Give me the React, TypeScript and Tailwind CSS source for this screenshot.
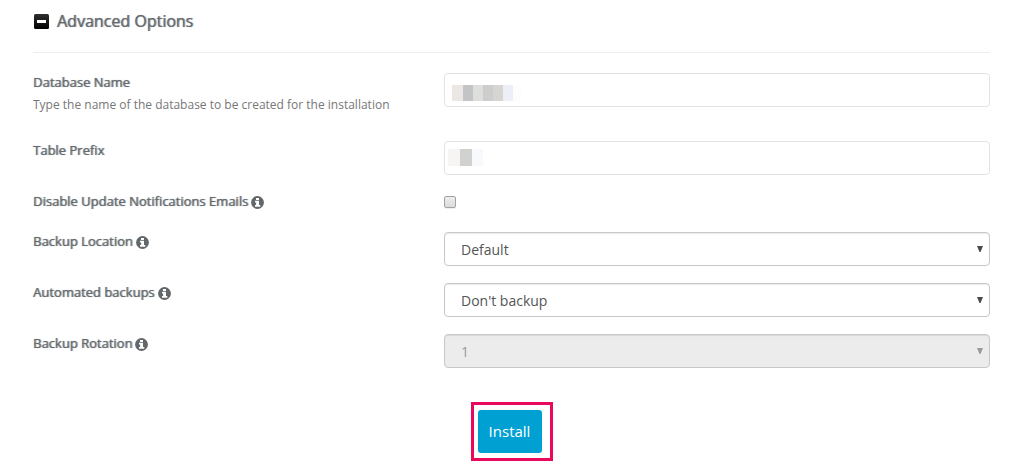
import type { ReactNode } from "react";

function InfoIcon() {
  return (
    <svg viewBox="0 0 14 14" className="ml-[3px] inline-block size-[13px] align-[-3px]" aria-hidden="true">
      <circle cx="7" cy="7" r="6.9" fill="#63676a" />
      <path d="M5.400 2.200h3.200v2H5.400z M4.300 5.200h4.300v4.600h1.400v1.900H4.300V9.800h1.200V7.100H4.300z" fill="#fff" />
    </svg>
  );
}

function ToggleIcon() {
  return (
    <svg viewBox="0 0 15 15" className="size-[15px]" aria-hidden="true">
      <defs>
        <linearGradient id="toggle" x1="0" y1="0" x2="0" y2="1">
          <stop offset="0" stopColor="#303030" />
          <stop offset="1" stopColor="#000" />
        </linearGradient>
      </defs>
      <rect width="15" height="15" rx="1.500" fill="url(#toggle)" />
      <rect x="3" y="6" width="9" height="3" fill="#fff" />
    </svg>
  );
}

type RowProps = {
  id: string;
  label: string;
  info?: boolean;
  hint?: string;
  className?: string;
  children: ReactNode;
};

function Row({ id, label, info, hint, className = "", children }: RowProps) {
  return (
    <div className={`grid grid-cols-[411fr_546fr] ${className}`}>
      <div>
        <label htmlFor={id} className="block text-[13px] leading-[18px] [text-shadow:0_0_1px_#666a6d80,1px_0_0_#666a6d80]">
          {label}
          {info && <InfoIcon />}
        </label>
        {hint && <p className="mt-[5px] text-[12px] leading-[18px] text-[#777]">{hint}</p>}
      </div>
      <div>{children}</div>
    </div>
  );
}

function MaskedInput({ id, children }: { id: string; children: ReactNode }) {
  return (
    <div className="relative">
      <input
        id={id}
        type="text"
        className="block h-[34px] w-full rounded-[4px] border border-[#e3e3e3] bg-white px-4 text-[14px] outline-none"
      />
      <div className="pointer-events-none absolute inset-y-0 left-0 flex">{children}</div>
    </div>
  );
}

function SelectBox({ id, value, disabled }: { id: string; value: string; disabled?: boolean }) {
  return (
    <div className="relative">
      <select
        id={id}
        disabled={disabled}
        className="block h-[34px] w-full appearance-none rounded-[4px] border border-[#c8c8c8] bg-white px-4 text-[14px] text-[#555] shadow-[inset_0_1px_1px_rgba(0,0,0,0.08)] outline-none disabled:bg-[#ececec] disabled:text-[#999] disabled:opacity-100"
      >
        <option>{value}</option>
      </select>
      <svg
        viewBox="0 0 6 6"
        className={`pointer-events-none absolute top-[14px] right-[7px] size-[6px] ${disabled ? "text-[#999]" : "text-[#4a4a4a]"}`}
        aria-hidden="true"
      >
        <path d="M0 0H6L3.500 6H2.500z" fill="currentColor" />
      </svg>
    </div>
  );
}

export default function App() {
  return (
    <main className="bg-white px-[33px] pt-[10px] pb-[14px] font-['Open_Sans','Noto_Sans',sans-serif] text-[#666a6d]">
      <h2 className="flex items-center gap-2 border-b border-[#eee] pb-5 pl-px text-[16px] leading-[22px] font-normal [text-shadow:0_0_1px_#666a6d80,1px_0_0_#666a6d80]">
        <ToggleIcon />
        Advanced Options
      </h2>
      <form className="flex flex-col gap-[17px] pt-5" onSubmit={(e) => e.preventDefault()}>
        <Row
          id="database"
          label="Database Name"
          hint="Type the name of the database to be created for the installation"
          className="min-h-[51px]"
        >
          <MaskedInput id="database">
            <div className="mt-3 ml-2 flex h-4">
              <span className="w-[11px] bg-[#ebe7e4]" />
              <span className="w-[10px] bg-[#c3c4c6]" />
              <span className="w-[10px] bg-[#dededc]" />
              <span className="w-[10px] bg-[#cdcdce]" />
              <span className="w-[10px] bg-[#d6d5d1]" />
              <span className="w-[10px] bg-[#ecf0f6]" />
              <span className="w-[8px] bg-[#fdfdfd]" />
            </div>
          </MaskedInput>
        </Row>
        <Row id="prefix" label="Table Prefix">
          <MaskedInput id="prefix">
            <div className="mt-2 ml-1 flex h-[17px]">
              <span className="w-[12px] bg-[#f6f5f4]" />
              <span className="w-[12px] bg-[#d1d1cf]" />
              <span className="w-[11px] bg-[#f7f9fc]" />
            </div>
          </MaskedInput>
        </Row>
        <Row id="emails" label="Disable Update Notifications Emails" info className="min-h-[23px]">
          <input
            id="emails"
            type="checkbox"
            className="mt-1 block size-[12px] appearance-none rounded-[2px] border border-[#a3a3a3] bg-linear-to-b from-[#ededed] to-[#dcdcdc] shadow-[0_1px_1px_#eee] checked:bg-[#666]"
          />
        </Row>
        <Row id="location" label="Backup Location" info>
          <SelectBox id="location" value="Default" />
        </Row>
        <Row id="automated" label="Automated backups" info>
          <SelectBox id="automated" value="Don't backup" />
        </Row>
        <Row id="rotation" label="Backup Rotation" info>
          <SelectBox id="rotation" value="1" disabled />
        </Row>
        <div className="mx-auto mt-[17px] border-3 border-[#e9085b] py-[5px] pr-2 pl-1">
          <button type="submit" className="block w-16 rounded-[3px] bg-[#00a0d2] py-[11px] text-center text-[15px] leading-[21px] text-white">
            Install
          </button>
        </div>
      </form>
    </main>
  );
}
